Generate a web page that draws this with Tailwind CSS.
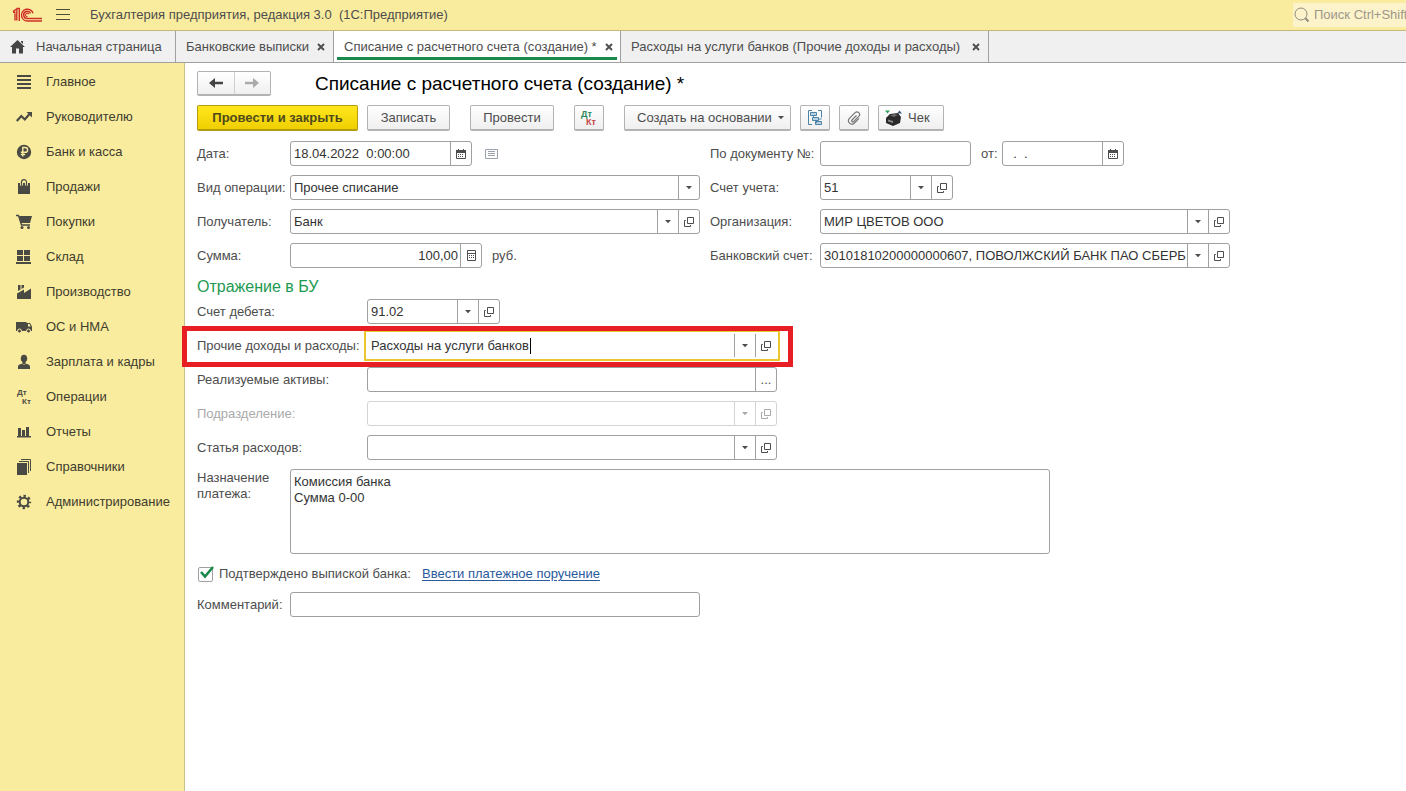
<!DOCTYPE html>
<html lang="ru">
<head>
  <meta charset="UTF-8" />
  <meta name="viewport" content="width=device-width, initial-scale=1.0" />
  <title>Списание с расчетного счета (создание) *</title>
  <script src="https://cdn.jsdelivr.net/npm/@tailwindcss/browser@4"></script>
</head>
<body class="flex min-h-screen flex-col overflow-x-hidden bg-white font-['Liberation_Sans',Arial,sans-serif] text-[13px] leading-4 text-[#4d4d4d]">

  <!-- Общие значки -->
  <svg class="hidden">
    <symbol id="i-down" viewBox="0 0 7 7"><path d="M0 2h6L3 5.2z" fill="currentColor" /></symbol>
    <symbol id="i-open" viewBox="0 0 10 10"><path d="M3.5 .5h6v6h-6zM1.8 3.5H.5v6h6V8" fill="none" stroke="currentColor" /></symbol>
    <symbol id="i-cal" viewBox="0 0 10 10"><path d="M.5 1.5h9v8h-9z" fill="none" stroke="currentColor" /><path d="M0 1h10v3H0zM2 0h1v2H2zM7 0h1v2H7zM2 5h1v1H2zM4 5h1v1H4zM6 5h1v1H6zM2 7h1v1H2zM4 7h1v1H4zM6 7h1v1H6z" fill="currentColor" /></symbol>
    <symbol id="i-close" viewBox="0 0 8 8"><path d="M1 1l6 6M7 1L1 7" stroke="currentColor" stroke-width="1.9" fill="none" /></symbol>
  </svg>

  <!-- Заголовок окна -->
  <header class="flex h-[31px] items-center border-b border-[#c5b878] bg-[#faec9e]">
    <svg class="ml-3 h-4 w-[31px]" viewBox="0 0 31 16" fill="none" stroke="#cf2f27">
      <path d="M1 4.6L4.8 1.8v11.8M3 6.2v7.4M1 5.2h2.5M4.5 1.5H7.3v12.4" stroke-width="1.4" />
      <path d="M21 6.2A5.9 5.9 0 1 0 15.5 14H30M18.5 6.3A3.6 3.6 0 1 0 15.5 11.5H30" stroke-width="1.5" />
      <path d="M16.8 7.2A1.7 1.7 0 1 0 15.5 9.6" stroke-width="1.1" />
    </svg>
    <button class="ml-[13px] flex h-5 w-[14px] items-center" aria-label="Меню">
      <svg class="h-3 w-[14px]" viewBox="0 0 14 12"><path d="M0 .5h14M0 5.5h14M0 10.5h14" stroke="#4d4d3c" /></svg>
    </button>
    <div class="ml-5 whitespace-pre">Бухгалтерия предприятия, редакция 3.0  (1С:Предприятие)</div>
    <label class="ml-auto flex h-6 w-[113px] items-center overflow-hidden bg-[#fcf3cb] pl-px text-[#9c978a]">
      <svg class="mr-1 size-4 shrink-0" viewBox="0 0 16 16" fill="none" stroke="#8f8b7c"><circle cx="7" cy="7" r="6" /><path d="M11.3 11.3l3.2 3.2" stroke-width="2" /></svg>
      <input type="text" aria-label="Поиск" placeholder="Поиск Ctrl+Shift+F" class="w-32 shrink-0 placeholder:text-[#9c978a]" />
    </label>
  </header>

  <!-- Вкладки -->
  <nav class="flex h-8 border-b border-[#a0a0a0] bg-[#f0f0f0]">
    <a href="#" class="flex w-44 items-center border-r border-[#a0a0a0] pl-[10px]">
      <svg class="mr-[11px] h-[14px] w-[15px]" viewBox="0 0 15 14" fill="#454545"><path d="M7.5 0L15 7h-2v6.5H9V8.5H6v5H2V7H0zM11 1h2v3l-2-2z" /></svg>
      Начальная страница
    </a>
    <div class="flex w-[158px] items-center justify-between border-r border-[#a0a0a0] pr-2 pl-[10px]">
      <a href="#">Банковские выписки</a>
      <button aria-label="Закрыть"><svg class="size-2"><use href="#i-close" /></svg></button>
    </div>
    <div class="flex w-[287px] border-r border-[#a0a0a0] bg-white px-[3px] pb-[2px]">
      <div class="flex grow items-center justify-between border-b-3 border-[#198a49] pt-[5px] pr-1 pl-[7px]">
        <a href="#">Списание с расчетного счета (создание) *</a>
        <button aria-label="Закрыть"><svg class="size-2"><use href="#i-close" /></svg></button>
      </div>
    </div>
    <div class="flex w-[368px] items-center justify-between border-r border-[#a0a0a0] pr-2 pl-[10px]">
      <a href="#">Расходы на услуги банков (Прочие доходы и расходы)</a>
      <button aria-label="Закрыть"><svg class="size-2"><use href="#i-close" /></svg></button>
    </div>
  </nav>

  <div class="flex grow">
    <!-- Разделы -->
    <aside class="w-[185px] shrink-0 border-r border-[#c9c08a] bg-[#faec9e] pt-px text-[#403c2e]">
      <a href="#" class="flex h-[35px] items-center gap-[14px] pl-4">
        <svg class="size-4" viewBox="0 0 16 16"><path d="M1 2h14M1 6h14M1 10h14M1 14h14" stroke="#4a4a45" stroke-width="2" /></svg>Главное</a>
      <a href="#" class="flex h-[35px] items-center gap-[14px] pl-4">
        <svg class="size-4" viewBox="0 0 16 16"><path d="M.8 12l4.5-5 3.5 3.5L13.5 5" fill="none" stroke="#4a4a45" stroke-width="2.2" /><path d="M10.5 3H16v5.5z" fill="#4a4a45" /></svg>Руководителю</a>
      <a href="#" class="flex h-[35px] items-center gap-[14px] pl-4">
        <svg class="size-4" viewBox="0 0 16 16"><circle cx="8" cy="8" r="7.2" fill="#4a4a45" /><path d="M6.8 12.5v-9h2.4a2.4 2.4 0 0 1 0 4.8H4.8M4.8 10.5h4.4" fill="none" stroke="#faec9e" stroke-width="1.4" /></svg>Банк и касса</a>
      <a href="#" class="flex h-[35px] items-center gap-[14px] pl-4">
        <svg class="size-4" viewBox="0 0 16 16"><path d="M2 4h12v11H2z" fill="#4a4a45" /><path d="M5.5 6.5V3.2a2.5 2.5 0 0 1 5 0v3.3" fill="none" stroke="#faec9e" stroke-width="3" /><path d="M5.5 6.5V3.2a2.5 2.5 0 0 1 5 0v3.3" fill="none" stroke="#4a4a45" stroke-width="1.2" /></svg>Продажи</a>
      <a href="#" class="flex h-[35px] items-center gap-[14px] pl-4">
        <svg class="size-4" viewBox="0 0 16 16"><path d="M3 2h13l-2 7H5z" fill="#4a4a45" /><path d="M0 1.5h2.5l3 9.500H14" fill="none" stroke="#4a4a45" stroke-width="1.4" /><circle cx="6" cy="13.5" r="1.5" fill="#4a4a45" /><circle cx="12.5" cy="13.5" r="1.5" fill="#4a4a45" /></svg>Покупки</a>
      <a href="#" class="flex h-[35px] items-center gap-[14px] pl-4">
        <svg class="size-4" viewBox="0 0 16 16"><path d="M1 1h6v5H1zM8 1h6v5H8zM1 7h6v5H1zM8 7h6v5H8zM0 13h15v2H0z" fill="#4a4a45" /></svg>Склад</a>
      <a href="#" class="flex h-[35px] items-center gap-[14px] pl-4">
        <svg class="size-4" viewBox="0 0 16 16"><path d="M1 15V9.500l7-4V9l7-4.500V15zM2 1h2.500v4.500L2 7zM5.500 1H8v2.500l-2.500 1.500z" fill="#4a4a45" /></svg>Производство</a>
      <a href="#" class="flex h-[35px] items-center gap-[14px] pl-4">
        <svg class="size-4" viewBox="0 0 16 16"><path d="M0 3h10.5v9H0zM10.500 4H14l2 3.500V12h-5.500z" fill="#4a4a45" /><path d="M12 5h1.5l1.2 2.5H12z" fill="#faec9e" /><circle cx="3.500" cy="12" r="2" fill="#4a4a45" stroke="#faec9e" /><circle cx="12.500" cy="12" r="2" fill="#4a4a45" stroke="#faec9e" /></svg>ОС и НМА</a>
      <a href="#" class="flex h-[35px] items-center gap-[14px] pl-4">
        <svg class="size-4" viewBox="0 0 16 16" fill="#4a4a45"><ellipse cx="8" cy="4.5" rx="3.2" ry="3.8" /><path d="M6.5 7h3v3h-3zM2 15v-2.500C2 10.500 5 10 6.500 9.500L8 11l1.500-1.500C11 10 14 10.500 14 12.500V15z" /></svg>Зарплата и кадры</a>
      <a href="#" class="flex h-[35px] items-center gap-[14px] pl-4">
        <svg class="size-4" viewBox="0 0 16 16" fill="#4a4a45" font-size="8" font-weight="bold" font-family="Liberation Sans"><text x="1" y="6">Дт</text><text x="6" y="15">Кт</text></svg>Операции</a>
      <a href="#" class="flex h-[35px] items-center gap-[14px] pl-4">
        <svg class="size-4" viewBox="0 0 16 16"><path d="M2 4h3v8H2zM6 6h3v6H6zM10 3h3v9h-3zM1 12h14v1.500H1z" fill="#4a4a45" /></svg>Отчеты</a>
      <a href="#" class="flex h-[35px] items-center gap-[14px] pl-4">
        <svg class="size-4" viewBox="0 0 16 16"><path d="M1 4h10v12H1z" fill="#4a4a45" /><path d="M3 2.5h9.500V14M5 .5h9.500V12" fill="none" stroke="#4a4a45" /></svg>Справочники</a>
      <a href="#" class="flex h-[35px] items-center gap-[14px] pl-4">
        <svg class="size-4" viewBox="0 0 16 16" fill="none" stroke="#4a4a45"><circle cx="8" cy="8" r="4.3" stroke-width="2" /><circle cx="8" cy="8" r="6" stroke-width="2.4" stroke-dasharray="2.35 2.35" stroke-dashoffset="1.17" /></svg>Администрирование</a>
    </aside>

    <!-- Форма документа -->
    <main class="min-w-0 grow px-3 pt-2">
      <div class="flex h-[25px] items-center">
        <div class="flex h-[25px] w-[74px] rounded-xs border border-b-2 border-[#b3b3b3] bg-linear-to-b from-white to-[#f0f0f0]">
          <button class="flex flex-1 items-center justify-center border-r border-[#d0d0d0] text-[#444]" aria-label="Назад">
            <svg class="h-[10px] w-[14px]" viewBox="0 0 14 10"><path d="M0 5L6 0v3.700h8v2.600H6V10z" fill="currentColor" /></svg>
          </button>
          <button class="flex flex-1 items-center justify-center text-[#aaa]" aria-label="Вперед">
            <svg class="h-[10px] w-[14px]" viewBox="0 0 14 10"><path d="M14 5L8 0v3.700H0v2.600h8V10z" fill="currentColor" /></svg>
          </button>
        </div>
        <h1 class="ml-11 text-[19px] leading-6 text-black">Списание с расчетного счета (создание) *</h1>
      </div>

      <!-- Команды -->
      <div class="mt-[9px] flex h-[26px] gap-[9px]">
        <button class="w-[161px] rounded-xs border border-b-2 border-[#b39d0e] bg-linear-to-b from-[#ffe71c] to-[#f0cf00] font-bold text-[#4f4a1c]">Провести и закрыть</button>
        <button class="w-[83px] rounded-xs border border-b-2 border-[#b3b3b3] bg-linear-to-b from-white to-[#efefef]">Записать</button>
        <button class="ml-[11px] w-[84px] rounded-xs border border-b-2 border-[#b3b3b3] bg-linear-to-b from-white to-[#efefef]">Провести</button>
        <button class="ml-[11px] flex w-[30px] items-center justify-center rounded-xs border border-b-2 border-[#b3b3b3] bg-linear-to-b from-white to-[#efefef]" aria-label="Движения документа">
          <svg class="h-4 w-[18px]" viewBox="0 0 18 16" font-size="9" font-weight="bold" font-family="Liberation Sans"><text x="1" y="7" fill="#2b8a5b">Дт</text><text x="6" y="15" fill="#c44545">Кт</text></svg>
        </button>
        <button class="ml-[11px] flex w-[167px] items-center justify-between rounded-xs border border-b-2 border-[#b3b3b3] bg-linear-to-b from-white to-[#efefef] pr-[5px] pl-3">Создать на основании<svg class="size-[7px]"><use href="#i-down" /></svg></button>
        <button class="flex w-[30px] items-center justify-center rounded-xs border border-b-2 border-[#b3b3b3] bg-linear-to-b from-white to-[#efefef]" aria-label="Структура подчиненности">
          <svg class="size-4" viewBox="0 0 16 16" fill="#b9d3e2" stroke="#4b84a6"><path d="M3.5 2.5h6v3h-6zM5.500 7.500h6v3h-6zM8.500 11.500h6v3h-6z" /><path d="M5 .5H1.500v14H5M11 .5h3.500v7M6.500 5.500v2M9.500 10.500V13M11.500 9h3" fill="none" /></svg>
        </button>
        <button class="flex w-[30px] items-center justify-center rounded-xs border border-b-2 border-[#b3b3b3] bg-linear-to-b from-white to-[#efefef]" aria-label="Файлы">
          <svg class="size-[14px]" viewBox="0 0 14 14" fill="none" stroke="#777" stroke-width="1.2"><path d="M9.500 4.500L5 9a1.100 1.100 0 0 0 1.600 1.600l5.200-5.200a2.600 2.600 0 0 0-3.700-3.700L2.400 7.400a3.400 3.400 0 0 0 4.800 4.800L12 7.400" /></svg>
        </button>
        <button class="flex w-[66px] items-center gap-[6px] rounded-xs border border-b-2 border-[#b3b3b3] bg-linear-to-b from-white to-[#efefef] pl-[6px]">
          <svg class="h-4 w-[17px]" viewBox="0 0 17 16"><path d="M1 8l4-4 8-1 3 4-1 6-7 3-7-3z" fill="#2a2a2a" /><path d="M5 5.500L9 4l4 1-4 2z" fill="#666" /><path d="M3 9.500l5 1.500v2l-5-1.500z" fill="#888" /><path d="M0 .5h5L2.500 3.500z" fill="#2ba05a" /><path d="M12 3.500h5L14.500.5z" fill="#3d5875" /></svg>
          Чек
        </button>
      </div>

      <!-- Реквизиты -->
      <div class="mt-[10px] grid max-w-[1033px] grid-cols-[503fr_520fr] gap-x-[10px] gap-y-[9px]">
        <div class="flex h-[25px] items-center">
          <label for="date" class="w-[93px] shrink-0">Дата:</label>
          <div class="flex h-[25px] w-[182px] rounded-[3px] border border-[#a0a0a0] bg-white">
            <input id="date" type="text" value="18.04.2022  0:00:00" class="min-w-0 grow px-[3px] text-[#333]" />
            <button class="flex w-[21px] shrink-0 items-center justify-center border-l border-[#a0a0a0]" aria-label="Календарь"><svg class="size-[10px]"><use href="#i-cal" /></svg></button>
          </div>
          <svg class="ml-[13px] h-[10px] w-[13px]" viewBox="0 0 13 10"><path d="M.5.5h12v9H.5z" fill="none" stroke="#9aa0ac" /><path d="M3 2.500h7M3 4.500h7M3 6.500h7" stroke="#9aa0ac" /></svg>
        </div>
        <div class="flex h-[25px] items-center">
          <label for="docnum" class="w-[110px] shrink-0">По документу №:</label>
          <input id="docnum" type="text" class="h-[25px] w-[151px] rounded-[3px] border border-[#a0a0a0] bg-white px-[3px]" />
          <label for="docdate" class="ml-[10px] w-[21px]">от:</label>
          <div class="flex h-[25px] w-[122px] rounded-[3px] border border-[#a0a0a0] bg-white">
            <input id="docdate" type="text" value="  .  ." class="min-w-0 grow px-[3px] text-[#333]" />
            <button class="flex w-[21px] shrink-0 items-center justify-center border-l border-[#a0a0a0]" aria-label="Календарь"><svg class="size-[10px]"><use href="#i-cal" /></svg></button>
          </div>
        </div>

        <div class="flex h-[25px] items-center">
          <label for="kind" class="w-[93px] shrink-0">Вид операции:</label>
          <div class="relative flex h-[25px] grow rounded-[3px] border border-[#a0a0a0] bg-white">
            <select id="kind" class="grow appearance-none px-[3px] text-[#333]"><option>Прочее списание</option></select>
            <span class="pointer-events-none absolute inset-y-0 right-0 flex w-[21px] items-center justify-center border-l border-[#a0a0a0]"><svg class="size-[7px]"><use href="#i-down" /></svg></span>
          </div>
        </div>
        <div class="flex h-[25px] items-center">
          <label for="account" class="w-[110px] shrink-0">Счет учета:</label>
          <div class="flex h-[25px] w-[133px] rounded-[3px] border border-[#a0a0a0] bg-white">
            <input id="account" type="text" value="51" class="min-w-0 grow px-[3px] text-[#333]" />
            <button class="flex w-[21px] shrink-0 items-center justify-center border-l border-[#a0a0a0]" aria-label="Выбрать"><svg class="size-[7px]"><use href="#i-down" /></svg></button>
            <button class="flex w-[21px] shrink-0 items-center justify-center border-l border-[#a0a0a0]" aria-label="Открыть"><svg class="size-[10px]"><use href="#i-open" /></svg></button>
          </div>
        </div>

        <div class="flex h-[25px] items-center">
          <label for="payee" class="w-[93px] shrink-0">Получатель:</label>
          <div class="flex h-[25px] grow rounded-[3px] border border-[#a0a0a0] bg-white">
            <input id="payee" type="text" value="Банк" class="min-w-0 grow px-[3px] text-[#333]" />
            <button class="flex w-[21px] shrink-0 items-center justify-center border-l border-[#a0a0a0]" aria-label="Выбрать"><svg class="size-[7px]"><use href="#i-down" /></svg></button>
            <button class="flex w-[21px] shrink-0 items-center justify-center border-l border-[#a0a0a0]" aria-label="Открыть"><svg class="size-[10px]"><use href="#i-open" /></svg></button>
          </div>
        </div>
        <div class="flex h-[25px] items-center">
          <label for="org" class="w-[110px] shrink-0">Организация:</label>
          <div class="flex h-[25px] grow rounded-[3px] border border-[#a0a0a0] bg-white">
            <input id="org" type="text" value="МИР ЦВЕТОВ ООО" class="min-w-0 grow px-[3px] text-[#333]" />
            <button class="flex w-[21px] shrink-0 items-center justify-center border-l border-[#a0a0a0]" aria-label="Выбрать"><svg class="size-[7px]"><use href="#i-down" /></svg></button>
            <button class="flex w-[21px] shrink-0 items-center justify-center border-l border-[#a0a0a0]" aria-label="Открыть"><svg class="size-[10px]"><use href="#i-open" /></svg></button>
          </div>
        </div>

        <div class="flex h-[25px] items-center">
          <label for="sum" class="w-[93px] shrink-0">Сумма:</label>
          <div class="flex h-[25px] w-[192px] rounded-[3px] border border-[#a0a0a0] bg-white">
            <input id="sum" type="text" value="100,00" class="min-w-0 grow pr-[2px] text-right text-[#333]" />
            <button class="flex w-[21px] shrink-0 items-center justify-center border-l border-[#a0a0a0]" aria-label="Калькулятор"><svg class="h-[11px] w-[9px]" viewBox="0 0 9 11"><path d="M.5.5h8v10h-8zM.5 3.500h8" fill="none" stroke="currentColor" /><path d="M2 5h1v1H2zM4 5h1v1H4zM6 5h1v1H6zM2 7h1v1H2zM4 7h1v1H4zM6 7h1v1H6z" fill="currentColor" /></svg></button>
          </div>
          <span class="ml-[10px]">руб.</span>
        </div>
        <div class="flex h-[25px] items-center">
          <label for="bank" class="w-[110px] shrink-0">Банковский счет:</label>
          <div class="flex h-[25px] grow rounded-[3px] border border-[#a0a0a0] bg-white">
            <input id="bank" type="text" value="30101810200000000607, ПОВОЛЖСКИЙ БАНК ПАО СБЕРБ" class="min-w-0 grow pl-[3px] text-[#333]" />
            <button class="flex w-[21px] shrink-0 items-center justify-center border-l border-[#a0a0a0]" aria-label="Выбрать"><svg class="size-[7px]"><use href="#i-down" /></svg></button>
            <button class="flex w-[21px] shrink-0 items-center justify-center border-l border-[#a0a0a0]" aria-label="Открыть"><svg class="size-[10px]"><use href="#i-open" /></svg></button>
          </div>
        </div>
      </div>

      <!-- Отражение в БУ -->
      <h2 class="mt-[9px] mb-[2px] text-[16px] leading-5 text-[#1d9a50]">Отражение в БУ</h2>
      <div class="flex max-w-[580px] flex-col gap-[9px]">
        <div class="flex h-[25px] items-center">
          <label for="debit" class="w-[170px] shrink-0">Счет дебета:</label>
          <div class="flex h-[25px] w-[133px] rounded-[3px] border border-[#a0a0a0] bg-white">
            <input id="debit" type="text" value="91.02" class="min-w-0 grow px-[3px] text-[#333]" />
            <button class="flex w-[21px] shrink-0 items-center justify-center border-l border-[#a0a0a0]" aria-label="Выбрать"><svg class="size-[7px]"><use href="#i-down" /></svg></button>
            <button class="flex w-[21px] shrink-0 items-center justify-center border-l border-[#a0a0a0]" aria-label="Открыть"><svg class="size-[10px]"><use href="#i-open" /></svg></button>
          </div>
        </div>
        <div class="relative flex h-[25px] items-center">
          <label for="other" class="w-[170px] shrink-0">Прочие доходы и расходы:</label>
          <div class="relative flex h-[25px] grow border border-white bg-white outline-2 outline-offset-1 outline-[#ecc62f]">
            <input id="other" type="text" value="Расходы на услуги банков" class="min-w-0 grow px-[3px] text-[#333]" />
            <span class="absolute top-1 left-[162px] h-4 w-px bg-black"></span>
            <button class="flex w-[21px] shrink-0 items-center justify-center border-l border-[#a0a0a0]" aria-label="Выбрать"><svg class="size-[7px]"><use href="#i-down" /></svg></button>
            <button class="flex w-[21px] shrink-0 items-center justify-center border-l border-[#a0a0a0]" aria-label="Открыть"><svg class="size-[10px]"><use href="#i-open" /></svg></button>
          </div>
          <!-- Рамка выделения -->
          <div class="pointer-events-none absolute -top-[7px] -right-4 -bottom-[9px] -left-[15px] z-10 border-5 border-[#e81e25]"></div>
        </div>
        <div class="flex h-[25px] items-center">
          <label for="assets" class="w-[170px] shrink-0">Реализуемые активы:</label>
          <div class="flex h-[25px] grow rounded-[3px] border border-[#a0a0a0] bg-white">
            <input id="assets" type="text" class="min-w-0 grow px-[3px] text-[#333]" />
            <button class="w-[21px] shrink-0 border-l border-[#a0a0a0]">...</button>
          </div>
        </div>
        <div class="flex h-[25px] items-center text-[#aaa]">
          <label for="dept" class="w-[170px] shrink-0">Подразделение:</label>
          <div class="flex h-[25px] grow rounded-[3px] border border-[#d4d4d4] bg-white">
            <input id="dept" type="text" disabled class="min-w-0 grow px-[3px]" />
            <button disabled class="flex w-[21px] shrink-0 items-center justify-center border-l border-[#d4d4d4]" aria-label="Выбрать"><svg class="size-[7px]"><use href="#i-down" /></svg></button>
            <button disabled class="flex w-[21px] shrink-0 items-center justify-center border-l border-[#d4d4d4]" aria-label="Открыть"><svg class="size-[10px]"><use href="#i-open" /></svg></button>
          </div>
        </div>
        <div class="flex h-[25px] items-center">
          <label for="item" class="w-[170px] shrink-0">Статья расходов:</label>
          <div class="flex h-[25px] grow rounded-[3px] border border-[#a0a0a0] bg-white">
            <input id="item" type="text" class="min-w-0 grow px-[3px] text-[#333]" />
            <button class="flex w-[21px] shrink-0 items-center justify-center border-l border-[#a0a0a0]" aria-label="Выбрать"><svg class="size-[7px]"><use href="#i-down" /></svg></button>
            <button class="flex w-[21px] shrink-0 items-center justify-center border-l border-[#a0a0a0]" aria-label="Открыть"><svg class="size-[10px]"><use href="#i-open" /></svg></button>
          </div>
        </div>
      </div>

      <div class="mt-[9px] flex max-w-[853px]">
        <label for="purpose" class="w-[93px] shrink-0 pt-px">Назначение<br />платежа:</label>
        <textarea id="purpose" class="h-[85px] grow resize-none rounded-[3px] border border-[#a0a0a0] bg-white px-[3px] py-1 text-[#333]">Комиссия банка
Сумма 0-00</textarea>
      </div>

      <div class="mt-[10px] flex h-5 items-center">
        <span class="relative ml-px flex">
          <input id="confirmed" type="checkbox" checked class="size-[15px] appearance-none rounded-xs border border-[#a0a0a0] bg-white" />
          <svg class="pointer-events-none absolute -top-px left-[2px] h-[13px] w-[14px]" viewBox="0 0 14 13"><path d="M1 6l4 4.500L13 1" fill="none" stroke="#198a49" stroke-width="2.6" /></svg>
        </span>
        <label for="confirmed" class="ml-[6px] w-[203px]">Подтверждено выпиской банка:</label>
        <a href="#" class="text-[#2a5a9c] underline underline-offset-2">Ввести платежное поручение</a>
      </div>

      <div class="mt-2 flex h-[25px] max-w-[503px] items-center">
        <label for="comment" class="w-[93px] shrink-0">Комментарий:</label>
        <input id="comment" type="text" class="h-[25px] min-w-0 grow rounded-[3px] border border-[#a0a0a0] bg-white px-[3px]" />
      </div>
    </main>
  </div>
</body>
</html>
